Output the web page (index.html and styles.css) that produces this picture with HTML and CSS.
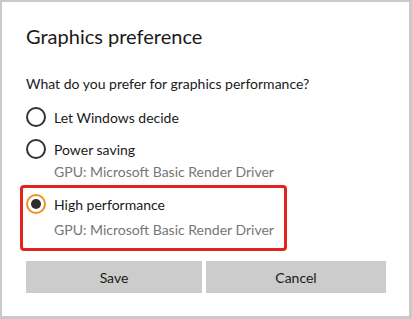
FILE: index.html
```html
<!DOCTYPE html>
<html lang="en">
<head>
    <meta charset="UTF-8">
    <meta name="viewport" content="width=device-width, initial-scale=1.0">
    <title>Graphics preference</title>
    <link rel="stylesheet" href="styles.css">
</head>
<body>

    <div class="dialog">
        <h1>Graphics preference</h1>

        <p class="question">What do you prefer for graphics performance?</p>

        <!-- Options -->
        <div class="options">
            <div class="option">
                <span class="radio"></span>
                <span class="label">Let Windows decide</span>
            </div>
            <div class="option">
                <span class="radio"></span>
                <span class="label">Power saving</span>
            </div>
            <div class="gpu">GPU: Microsoft Basic Render Driver</div>

            <div class="highlight">
                <div class="option">
                    <span class="radio checked"></span>
                    <span class="label">High performance</span>
                </div>
                <div class="gpu">GPU: Microsoft Basic Render Driver</div>
            </div>
        </div>

        <!-- Buttons -->
        <div class="buttons">
            <button>Save</button>
            <button>Cancel</button>
        </div>
    </div>

</body>
</html>
```

FILE: styles.css
```css
html, body {
    margin: 0;
    padding: 0;
    height: 100%;
}
body {
    background-color: #c9c9c9;
    font-family: Lato, "Noto Sans", sans-serif;
    color: #1a1a1a;
    overflow: hidden;
}
.dialog {
    box-sizing: border-box;
    width: 407px;
    height: 314px;
    margin: 2px 0 0 2px;
    background-color: #fff;
    padding: 20px 24px 0 24px;
}
h1 {
    margin: 0;
    font-size: 20px;
    font-weight: normal;
    line-height: 28px;
}
.question {
    margin: 24px 0 0 0;
    font-size: 14px;
    line-height: 20px;
}
.options {
    margin-top: 13px;
}
.option {
    display: flex;
    align-items: center;
    height: 20px;
    margin-bottom: 12px;
}
.radio {
    box-sizing: border-box;
    width: 20px;
    height: 20px;
    border: 2px solid #333;
    border-radius: 50%;
    margin-right: 8px;
    position: relative;
}
.radio.checked {
    border-color: #f0901c;
}
.radio.checked::after {
    content: "";
    position: absolute;
    left: 3px;
    top: 3px;
    width: 10px;
    height: 10px;
    border-radius: 50%;
    background-color: #2b2b2b;
}
.label {
    font-size: 14px;
}
.gpu {
    font-size: 14px;
    color: #767676;
    line-height: 20px;
    margin-left: 28px;
    margin-top: -9px;
    white-space: nowrap;
}
.highlight {
    margin: 3px 0 0 -6px;
    width: 267px;
    height: 66px;
    box-sizing: border-box;
    border: 3px solid #e3231d;
    border-radius: 4px;
    padding: 6px 3px 0 3px;
}
.highlight .option {
    margin-bottom: 6px;
}
.highlight .gpu {
    margin-top: 0;
}
.buttons {
    display: flex;
    gap: 4px;
    margin-top: 10px;
}
button {
    flex: none;
    width: 176px;
    height: 32px;
    border: none;
    background-color: #cccccc;
    font-family: inherit;
    font-size: 14px;
    color: #1a1a1a;
    padding: 0;
}
button + button {
    width: 180px;
}
```
